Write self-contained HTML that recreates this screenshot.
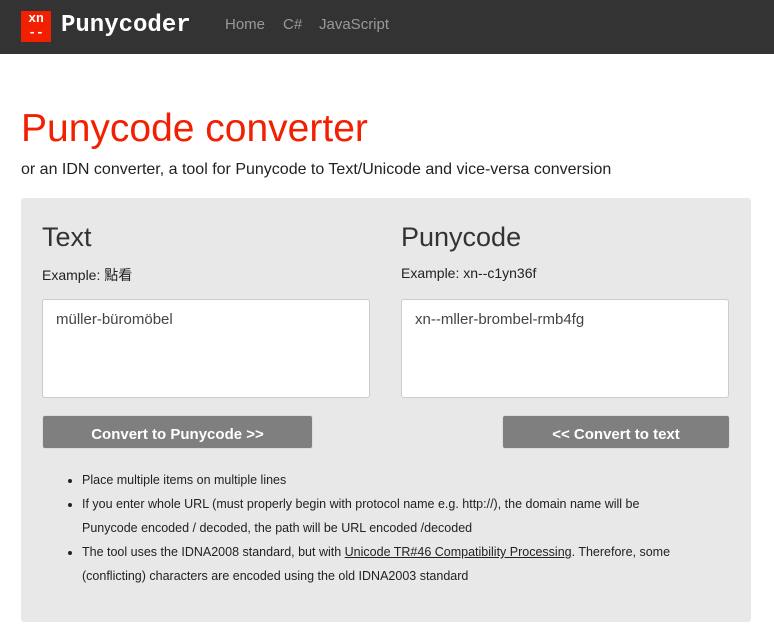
<!DOCTYPE html>
<html><head><meta charset="utf-8"><style>
body{margin:0;background:#fff;font-family:"Liberation Sans","Noto Sans CJK JP",sans-serif;color:#222;}
.nav{height:54px;background:#333;position:relative}
.logo{position:absolute;left:21px;top:11px;width:30px;height:31px;background:#f21f00;color:#fff;font:bold 13px "Liberation Mono",monospace;line-height:14px;text-align:center;padding-top:1px;box-sizing:border-box}
.brand{position:absolute;left:61px;top:12px;color:#fff;font:bold 24px "Liberation Mono",monospace}
.nav a{position:absolute;top:16px;color:#999;font-size:15px;text-decoration:none}
h1{position:absolute;left:21px;top:107px;margin:0;font-weight:normal;font-size:39px;color:#f21f00}
.sub{position:absolute;left:21px;top:161px;font-size:16px}
.box{position:absolute;left:21px;top:198px;width:730px;height:424px;background:#e8e8e8;border-radius:3px}
.h2{position:absolute;font-size:27px;color:#333;top:222px}
.ex{position:absolute;font-size:14px;top:265px}
.ta{position:absolute;top:299px;width:313px;height:86px;background:#fff;border:1px solid #ccc;border-radius:3px;padding:11px 0 0 13px;font-size:15px;color:#444}
.btn{position:absolute;top:415px;height:34px;background:#7f7f7f;color:#fff;font-weight:bold;font-size:15px;text-align:center;line-height:38px;border-radius:3px;border:1px solid #ddd;box-sizing:border-box}
ul{position:absolute;left:60px;top:468px;margin:0;padding:0 0 0 22px;width:610px;font-size:12.5px;line-height:24px;color:#222}
</style></head><body>
<div class="nav"><div class="logo">xn<br>--</div><div class="brand">Punycoder</div>
<a style="left:225px">Home</a><a style="left:283px">C#</a><a style="left:319px">JavaScript</a></div>
<h1>Punycode converter</h1>
<div class="sub">or an IDN converter, a tool for Punycode to Text/Unicode and vice-versa conversion</div>
<div class="box"></div>
<div class="h2" style="left:42px">Text</div><div class="h2" style="left:401px">Punycode</div>
<div class="ex" style="left:42px">Example: 點看</div><div class="ex" style="left:401px">Example: xn--c1yn36f</div>
<div class="ta" style="left:42px">müller-büromöbel</div><div class="ta" style="left:401px">xn--mller-brombel-rmb4fg</div>
<div class="btn" style="left:42px;width:271px">Convert to Punycode &gt;&gt;</div>
<div class="btn" style="left:502px;width:228px">&lt;&lt; Convert to text</div>
<ul><li>Place multiple items on multiple lines</li>
<li>If you enter whole URL (must properly begin with protocol name e.g. http://), the domain name will be Punycode encoded / decoded, the path will be URL encoded /decoded</li>
<li>The tool uses the IDNA2008 standard, but with <u>Unicode TR#46 Compatibility Processing</u>. Therefore, some (conflicting) characters are encoded using the old IDNA2003 standard</li></ul>
</body></html>
